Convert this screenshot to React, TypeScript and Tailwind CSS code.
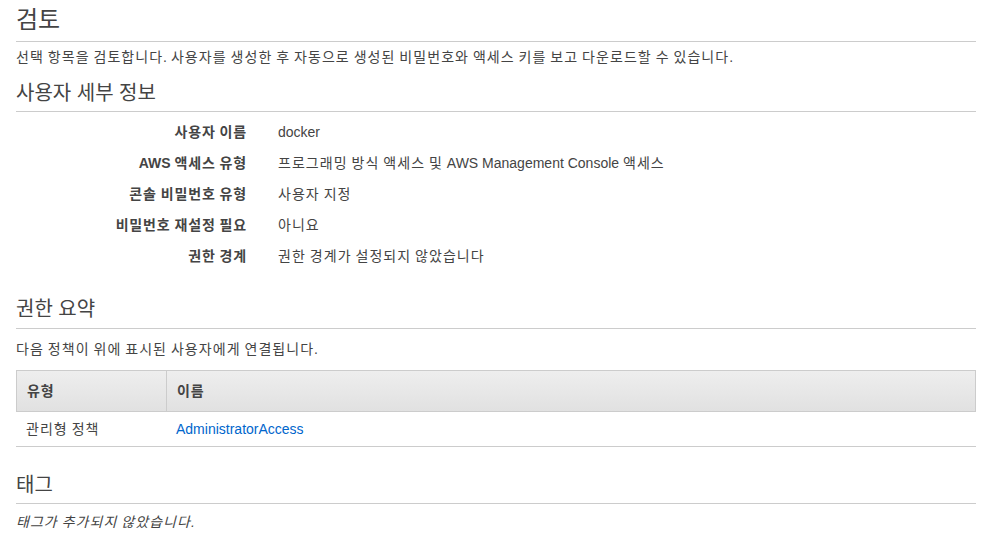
import React from "react";

function K({ t, bold = false }: { t: string; bold?: boolean }) {
  const parts = t.split(/([\uAC00-\uD7A3]+)/).filter((p) => p.length > 0);
  return (
    <>
      {parts.map((p, i) =>
        /[\uAC00-\uD7A3]/.test(p) ? (
          <span key={i} className={bold ? "tracking-[0.85px]" : "tracking-[1.05px]"}>
            {p}
          </span>
        ) : (
          <span key={i}>{p}</span>
        )
      )}
    </>
  );
}

const rows: [string, string][] = [
  ["사용자 이름", "docker"],
  ["AWS 액세스 유형", "프로그래밍 방식 액세스 및 AWS Management Console 액세스"],
  ["콘솔 비밀번호 유형", "사용자 지정"],
  ["비밀번호 재설정 필요", "아니요"],
  ["권한 경계", "권한 경계가 설정되지 않았습니다"],
];

export default function App() {
  return (
    <div
      className="px-4 text-[14px] text-[#444] bg-white"
      style={{ fontFamily: '"Liberation Sans", "Noto Sans CJK KR", sans-serif' }}
    >
      <h1 className="pt-[4px] pb-[5px] text-[24px] leading-[32px] font-normal border-b border-[#ccc]">검토</h1>
      <p className="mt-[5px] leading-[20px]">
        <K t="선택 항목을 검토합니다. 사용자를 생성한 후 자동으로 생성된 비밀번호와 액세스 키를 보고 다운로드할 수 있습니다." />
      </p>
      <h2 className="mt-[12px] pb-[4px] text-[20px] leading-[28px] font-normal border-b border-[#ccc]">사용자 세부 정보</h2>
      <div className="mt-[5px] flex flex-col">
        {rows.map(([k, v]) => (
          <div key={k} className="flex h-[31px] items-center">
            <div className="w-[231px] text-right font-bold">
              <K t={k} bold />
            </div>
            <div className="ml-[31px]">
              <K t={v} />
            </div>
          </div>
        ))}
      </div>
      <h2 className="mt-[23px] pb-[5px] text-[20px] leading-[28px] font-normal border-b border-[#ccc]">권한 요약</h2>
      <p className="mt-[10px] leading-[20px]">
        <K t="다음 정책이 위에 표시된 사용자에게 연결됩니다." />
      </p>
      <div className="mt-[11px]">
        <div className="flex h-[42px] border border-[#ccc] bg-gradient-to-b from-[#eee] to-[#e1e1e1] font-bold">
          <div className="w-[150px] border-r border-[#ccc] flex items-center pl-[10px]">
            <K t="유형" bold />
          </div>
          <div className="flex-1 flex items-center pl-[10px]">
            <K t="이름" bold />
          </div>
        </div>
        <div className="flex h-[35px] border-b border-[#ccc] items-center">
          <div className="w-[150px] pl-[10px]">
            <K t="관리형 정책" />
          </div>
          <div className="flex-1 pl-[10px] text-[#0066cc]">AdministratorAccess</div>
        </div>
      </div>
      <h2 className="mt-[24px] pb-[4px] text-[20px] leading-[28px] font-normal border-b border-[#ccc]">태그</h2>
      <p className="mt-[8px] leading-[20px] italic">
        <K t="태그가 추가되지 않았습니다." />
      </p>
    </div>
  );
}
